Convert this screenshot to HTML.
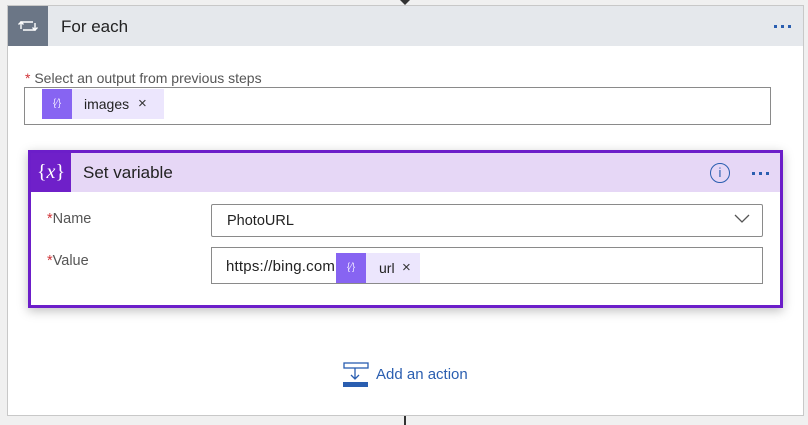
<!DOCTYPE html>
<html><head><style>
*{box-sizing:border-box;margin:0;padding:0}
body{width:808px;height:425px;background:#f0f0f0;position:relative;overflow:hidden;font-family:"Liberation Sans",sans-serif;}
.abs{position:absolute}
.tok{position:absolute;height:30px;background:#ece6fd;}
.tok .ic{position:absolute;left:0;top:0;width:30px;height:30px;background:#8764f2;color:#e9e0ff;font-size:10px;text-align:center;line-height:30px}
.tok .lb{position:absolute;left:42px;top:7px;font-size:14px;color:#222}
.tok .x{position:absolute;top:6px;font-size:15px;color:#333}
.req{color:#d13438}
.dots{position:absolute;width:20px;height:3px}
.dots i{position:absolute;top:0;width:3px;height:3px;background:#2a5eb0}
</style></head><body>
<div class="abs" style="left:404px;top:0;width:0;height:0;border-left:5px solid transparent;border-right:5px solid transparent;border-top:5px solid #333;margin-left:-4px"></div>
<div class="abs" style="left:7px;top:5px;width:797px;height:411px;background:#fff;border:1px solid #c8c8c8"></div>
<div class="abs" style="left:8px;top:6px;width:795px;height:40px;background:#e5e8ec"></div>
<div class="abs" style="left:8px;top:6px;width:40px;height:40px;background:#6b7686">
<svg width="40" height="40" viewBox="0 0 40 40"><g fill="none" stroke="#fff" stroke-width="1.4"><path d="M13 23V16H25"/><path d="M10.5 18.5L13 16L15.5 18.5" /><path d="M27 17V24H15"/><path d="M24.5 21.5L27 24L29.5 21.5"/></g></svg></div>
<div class="abs" style="left:61px;top:17px;font-size:17px;color:#222">For each</div>
<div class="dots" style="left:774px;top:25px"><i style="left:0"></i><i style="left:7px"></i><i style="left:14px"></i></div>
<div class="abs" style="left:25px;top:70px;font-size:14px;color:#555"><span class="req">*</span> Select an output from previous steps</div>
<div class="abs" style="left:24px;top:87px;width:747px;height:38px;border:1px solid #8a8a8a;background:#fff"></div>
<div class="tok" style="left:42px;top:89px;width:122px"><div class="ic">{⁄}</div><div class="lb">images</div><div class="x" style="left:96px">×</div></div>
<div class="abs" style="left:28px;top:150px;width:755px;height:158px;border:3px solid #6c1ec9;background:#fff;box-shadow:0 3px 10px rgba(0,0,0,.25)"></div>
<div class="abs" style="left:31px;top:153px;width:749px;height:39px;background:#e6d7f6"></div>
<div class="abs" style="left:31px;top:153px;width:40px;height:39px;background:#6f20c9;color:#fff;font-family:'Liberation Serif',serif;font-size:20px;text-align:center;line-height:38px">{<i>x</i>}</div>
<div class="abs" style="left:83px;top:163px;font-size:17px;color:#222">Set variable</div>
<div class="abs" style="left:710px;top:163px;width:20px;height:20px;border:1.5px solid #2a5eb0;border-radius:50%;color:#2a5eb0;font-size:13px;text-align:center;line-height:17px">i</div>
<div class="dots" style="left:752px;top:172px"><i style="left:0"></i><i style="left:7px"></i><i style="left:14px"></i></div>
<div class="abs" style="left:47px;top:211px;font-size:14.5px;color:#555"><span class="req">*</span>Name</div>
<div class="abs" style="left:47px;top:253px;font-size:14.5px;color:#555"><span class="req">*</span>Value</div>
<div class="abs" style="left:211px;top:204px;width:552px;height:33px;border:1px solid #8a8a8a;border-radius:2px;background:#fff"></div>
<div class="abs" style="left:227px;top:213px;font-size:14.5px;color:#222">PhotoURL</div>
<svg class="abs" style="left:734px;top:214px" width="16" height="10"><path d="M1 1L8 8L15 1" fill="none" stroke="#555" stroke-width="1.3"/></svg>
<div class="abs" style="left:211px;top:247px;width:552px;height:37px;border:1px solid #8a8a8a;background:#fff"></div>
<div class="abs" style="left:226px;top:258px;font-size:15px;color:#222;letter-spacing:0.2px">https://bing.com</div>
<div class="tok" style="left:336px;top:253px;width:84px"><div class="ic">{⁄}</div><div class="lb" style="left:43px">url</div><div class="x" style="left:66px">×</div></div>
<svg class="abs" style="left:343px;top:362px" width="26" height="26"><rect x="1" y="1" width="24" height="5" fill="none" stroke="#2a5eb0" stroke-width="1.3"/><path d="M12 6V17M8 13L12 17L16 13" fill="none" stroke="#2a5eb0" stroke-width="1.3"/><rect x="0" y="20" width="25" height="5" fill="#2a5eb0"/></svg>
<div class="abs" style="left:376px;top:366px;font-size:15px;color:#2a5eb0">Add an action</div>
<div class="abs" style="left:404px;top:416px;width:2px;height:9px;background:#333"></div>
</body></html>
